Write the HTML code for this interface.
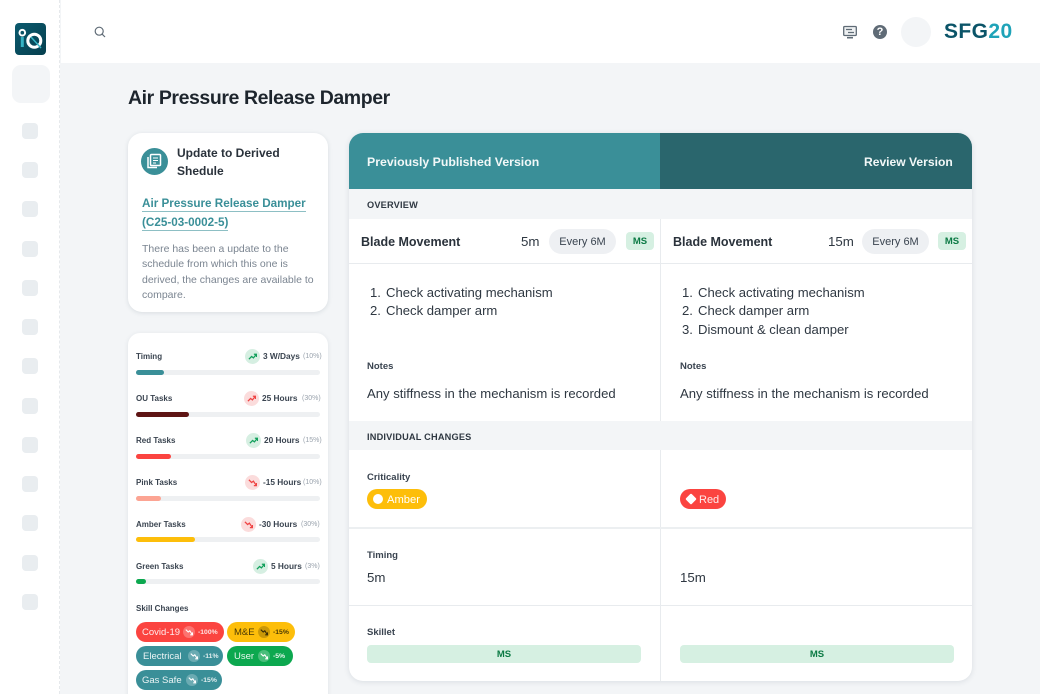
<!DOCTYPE html>
<html><head><meta charset="utf-8">
<style>
html,body{margin:0;padding:0;width:1040px;height:694px;overflow:hidden;background:#f3f5f7;font-family:"Liberation Sans",sans-serif;color:#1f2933}
#root{position:relative;width:1040px;height:694px;overflow:hidden}
.a{position:absolute}
.t{position:absolute;white-space:nowrap;line-height:20px}
.sq{position:absolute;left:22px;width:16px;height:16px;border-radius:4px;background:#e9edf0}
.track{position:absolute;left:136px;width:184px;height:5px;border-radius:3px;background:#eef0f2}
.fill{position:absolute;left:0;top:0;height:5px;border-radius:3px}
.ic{position:absolute;width:15px;height:15px;border-radius:50%}
.ic svg{position:absolute;left:3px;top:3px;width:9px;height:9px}
.pill{position:absolute;height:20px;border-radius:10px}
.pc{position:absolute;width:12px;height:12px;border-radius:50%;background:rgba(255,255,255,.25);top:4px}
.pc svg{position:absolute;left:2px;top:2px;width:8px;height:8px}
.l{font-size:8px;font-weight:bold;color:#3a4450;margin-top:1px}
.v{font-size:8.300px;font-weight:bold;color:#3a4450}
.p{font-size:7px;color:#9aa3ad;margin-top:1px}
.b{font-size:13.100px;color:#2f3842;margin-top:1px}
.h{font-size:9.200px;font-weight:bold;color:#2f3842;letter-spacing:.2px;margin-top:1px}
.n{font-size:9.500px;font-weight:bold;color:#3a4450}
.w{color:#fff}
.s{font-size:6.800px;font-weight:bold;top:1px !important}
</style></head><body>
<div id="root">
<!-- sidebar & header -->
<div class="a" style="left:0;top:0;width:60px;height:694px;background:#fff;border-right:1px dashed #e6e9ec;box-sizing:border-box"></div>
<div class="a" style="left:61px;top:0;width:979px;height:63px;background:#fff"></div>
<div class="a" style="left:15px;top:23px;width:31px;height:32px;border-radius:4px;background:linear-gradient(135deg,#0b5a6e,#063f4e)"></div>
<svg class="a" style="left:15px;top:23px" width="31" height="32" viewBox="0 0 31 32"><circle cx="7.300" cy="9.700" r="2.800" fill="none" stroke="#fff" stroke-width="2"/><rect x="5.800" y="14" width="3" height="10" fill="#36b3c4"/><circle cx="19.300" cy="17.700" r="6.500" fill="none" stroke="#fff" stroke-width="3"/><path d="M16 14l10 11" stroke="#36b3c4" stroke-width="1.500"/></svg>
<div class="a" style="left:12px;top:65px;width:38px;height:38px;border-radius:9px;background:#f3f5f7"></div>
<div class="sq" style="top:123px"></div><div class="sq" style="top:162px"></div><div class="sq" style="top:201px"></div><div class="sq" style="top:241px"></div><div class="sq" style="top:280px"></div><div class="sq" style="top:319px"></div><div class="sq" style="top:358px"></div><div class="sq" style="top:398px"></div><div class="sq" style="top:437px"></div><div class="sq" style="top:476px"></div><div class="sq" style="top:515px"></div><div class="sq" style="top:555px"></div><div class="sq" style="top:594px"></div>
<svg class="a" style="left:94px;top:26px" width="12" height="12" viewBox="0 0 12 12"><circle cx="5.200" cy="5.200" r="4" fill="none" stroke="#5f6b76" stroke-width="1.200"/><path d="M8.200 8.200l2.800 2.800" stroke="#5f6b76" stroke-width="1.200"/></svg>
<svg class="a" style="left:843px;top:25px" width="14" height="14" viewBox="0 0 14 14"><rect x=".7" y="1.500" width="12.600" height="9" rx="1" fill="#eef0f2" stroke="#5f6b76" stroke-width="1.300"/><path d="M3 4.500h6M5 7.500h6" stroke="#5f6b76" stroke-width="1.200"/><path d="M4 12.700h6" stroke="#5f6b76" stroke-width="1.600"/></svg>
<div class="a" style="left:873px;top:25px;width:14px;height:14px;border-radius:50%;background:#5f6b76;color:#fff;font-size:11px;font-weight:bold;line-height:14px;text-align:center">?</div>
<div class="a" style="left:901px;top:17px;width:30px;height:30px;border-radius:50%;background:#f3f5f7"></div>
<div class="t" style="left:944px;top:20px;font-size:21px;line-height:24px;font-weight:bold;color:#0b5468;letter-spacing:.4px">SFG<span style="color:#1fa3b8">20</span></div>

<div class="t" style="left:128px;top:85px;font-size:19.500px;line-height:26px;font-weight:bold;color:#1d252d;letter-spacing:-.42px">Air Pressure Release Damper</div>

<!-- info card -->
<div class="a" style="left:128px;top:133px;width:200px;height:179px;background:#fff;border-radius:14px;box-shadow:0 1px 5px rgba(40,60,80,.13)"></div>
<div class="a" style="left:141px;top:148px;width:27px;height:27px;border-radius:50%;background:#3a8f98"></div>
<svg class="a" style="left:146px;top:153px" width="17" height="17" viewBox="0 0 17 17"><rect x="4.500" y="1.500" width="10" height="11" rx="1" fill="none" stroke="#fff" stroke-width="1.500"/><path d="M2 4v10.500h9" fill="none" stroke="#fff" stroke-width="1.500"/><path d="M7 5h5M7 7.500h5M7 10h3" stroke="#fff" stroke-width="1.100"/></svg>
<div class="t" style="left:177px;top:143px;font-size:12px;font-weight:bold;color:#2a323b">Update to Derived</div>
<div class="t" style="left:177px;top:161px;font-size:12px;font-weight:bold;color:#2a323b">Shedule</div>
<div class="t" style="left:142px;top:196px;font-size:11.700px;color:#3a8f98;font-weight:bold;border-bottom:1px solid #8dbfc4;line-height:15px">Air Pressure Release Damper</div>
<div class="t" style="left:142px;top:215px;font-size:11.700px;color:#3a8f98;font-weight:bold;border-bottom:1px solid #8dbfc4;line-height:15px">(C25-03-0002-5)</div>
<div class="t" style="left:142px;top:239px;font-size:10.500px;color:#7b8591">There has been a update to the</div>
<div class="t" style="left:142px;top:254px;font-size:10.500px;color:#7b8591">schedule from which this one is</div>
<div class="t" style="left:142px;top:270px;font-size:10.500px;color:#7b8591">derived, the changes are available to</div>
<div class="t" style="left:142px;top:285px;font-size:10.500px;color:#7b8591">compare.</div>

<!-- stats card -->
<div class="a" style="left:128px;top:333px;width:200px;height:380px;background:#fff;border-radius:12px;box-shadow:0 1px 5px rgba(40,60,80,.1)"></div>
<svg width="0" height="0" style="position:absolute"><defs>
<symbol id="up" viewBox="0 0 10 10"><path d="M1 8l3-3 2 1.500L9 3M6.500 2.500H9.500V5.500" fill="none" stroke="currentColor" stroke-width="1.400"/></symbol>
<symbol id="dn" viewBox="0 0 10 10"><path d="M1 2l3 3 2-1.500L9 8M6.500 8.500H9.500V5.500" fill="none" stroke="currentColor" stroke-width="1.400"/></symbol>
</defs></svg>

<div class="t l" style="left:136px;top:346px">Timing</div>
<div class="ic" style="left:245px;top:349px;background:#d6efe2;color:#12a05c"><svg><use href="#up"/></svg></div>
<div class="t v" style="left:263px;top:346px">3 W/Days</div><div class="t p" style="left:303px;top:346px">(10%)</div>
<div class="track" style="top:370px"><div class="fill" style="width:28px;background:#3a8f98"></div></div>

<div class="t l" style="left:136px;top:388px">OU Tasks</div>
<div class="ic" style="left:244px;top:391px;background:#fbdcdc;color:#ef4444"><svg><use href="#up"/></svg></div>
<div class="t v" style="left:262px;top:388px">25 Hours</div><div class="t p" style="left:302px;top:388px">(30%)</div>
<div class="track" style="top:412px"><div class="fill" style="width:53px;background:#5e1414"></div></div>

<div class="t l" style="left:136px;top:430px">Red Tasks</div>
<div class="ic" style="left:246px;top:433px;background:#d6efe2;color:#12a05c"><svg><use href="#up"/></svg></div>
<div class="t v" style="left:264px;top:430px">20 Hours</div><div class="t p" style="left:303px;top:430px">(15%)</div>
<div class="track" style="top:454px"><div class="fill" style="width:35px;background:#fb4440"></div></div>

<div class="t l" style="left:136px;top:472px">Pink Tasks</div>
<div class="ic" style="left:245px;top:475px;background:#fbdcdc;color:#ef4444"><svg><use href="#dn"/></svg></div>
<div class="t v" style="left:263px;top:472px">-15 Hours</div><div class="t p" style="left:303px;top:472px">(10%)</div>
<div class="track" style="top:496px"><div class="fill" style="width:25px;background:#fca493"></div></div>

<div class="t l" style="left:136px;top:514px">Amber Tasks</div>
<div class="ic" style="left:241px;top:517px;background:#fbdcdc;color:#ef4444"><svg><use href="#dn"/></svg></div>
<div class="t v" style="left:259px;top:514px">-30 Hours</div><div class="t p" style="left:301px;top:514px">(30%)</div>
<div class="track" style="top:537px"><div class="fill" style="width:59px;background:#fdbe0a"></div></div>

<div class="t l" style="left:136px;top:556px">Green Tasks</div>
<div class="ic" style="left:253px;top:559px;background:#d6efe2;color:#12a05c"><svg><use href="#up"/></svg></div>
<div class="t v" style="left:271px;top:556px">5 Hours</div><div class="t p" style="left:305px;top:556px">(3%)</div>
<div class="track" style="top:579px"><div class="fill" style="width:10px;background:#0ca84f"></div></div>

<div class="t l" style="left:136px;top:598px">Skill Changes</div>

<div class="pill" style="left:136px;top:622px;width:88px;background:#fb4440"><div class="t w" style="left:6px;top:1px;font-size:9.500px;opacity:.9">Covid-19</div><div class="pc" style="left:47px"><svg color="#fff"><use href="#dn"/></svg></div><div class="t w s" style="left:62px;opacity:.85">-100%</div></div>
<div class="pill" style="left:227px;top:622px;width:68px;background:#fdbe0a"><div class="t" style="left:7px;top:1px;font-size:9.500px;color:#4a3a05">M&amp;E</div><div class="pc" style="left:31px;background:rgba(0,0,0,.2)"><svg color="#3a2d05"><use href="#dn"/></svg></div><div class="t s" style="left:46px;color:#4a3a05">-15%</div></div>
<div class="pill" style="left:136px;top:646px;width:87px;background:#3a8f98"><div class="t w" style="left:7px;top:1px;font-size:9.500px;opacity:.9">Electrical</div><div class="pc" style="left:52px"><svg color="#fff"><use href="#dn"/></svg></div><div class="t w s" style="left:67px;opacity:.85">-11%</div></div>
<div class="pill" style="left:227px;top:646px;width:66px;background:#0ca84f"><div class="t w" style="left:7px;top:1px;font-size:9.500px;opacity:.9">User</div><div class="pc" style="left:31px"><svg color="#fff"><use href="#dn"/></svg></div><div class="t w s" style="left:46px;opacity:.9">-5%</div></div>
<div class="pill" style="left:136px;top:670px;width:86px;background:#3a8f98"><div class="t w" style="left:6px;top:1px;font-size:9.500px;opacity:.9">Gas Safe</div><div class="pc" style="left:50px"><svg color="#fff"><use href="#dn"/></svg></div><div class="t w s" style="left:65px;opacity:.85">-15%</div></div>

<!-- main comparison card -->
<div class="a" style="left:349px;top:133px;width:623px;height:548px;background:#fff;border-radius:14px;box-shadow:0 1px 6px rgba(40,60,80,.12);overflow:hidden">
 <div class="a" style="left:0;top:0;width:311px;height:56px;background:#3a8f98"></div>
 <div class="a" style="left:311px;top:0;width:312px;height:56px;background:#2a666d"></div>
 <div class="a" style="left:0;top:56px;width:623px;height:30px;background:#f3f5f7"></div>
 <div class="a" style="left:0;top:288px;width:623px;height:29px;background:#f3f5f7"></div>
 <div class="a" style="left:311px;top:86px;width:1px;height:202px;background:#e8ebee"></div>
 <div class="a" style="left:311px;top:317px;width:1px;height:231px;background:#e8ebee"></div>
 <div class="a" style="left:0;top:130px;width:623px;height:1px;background:#e8ebee"></div>
 <div class="a" style="left:0;top:394px;width:623px;height:2px;background:#eceff1"></div>
 <div class="a" style="left:0;top:472px;width:623px;height:1px;background:#e8ebee"></div>
</div>
<div class="t" style="left:367px;top:152px;font-size:12.300px;font-weight:bold;color:#f2f8f8">Previously Published Version</div>
<div class="t" style="left:864px;top:152px;font-size:12.100px;font-weight:bold;color:#f2f8f8">Review Version</div>
<div class="t h" style="left:367px;top:194px">OVERVIEW</div>

<div class="t" style="left:361px;top:232px;font-size:12.500px;font-weight:bold;color:#2a323b">Blade Movement</div>
<div class="t" style="left:521px;top:232px;font-size:13.300px;color:#2f3842">5m</div>
<div class="a" style="left:549px;top:229px;width:67px;height:25px;border-radius:13px;background:#eef0f3;font-size:11px;line-height:26px;text-align:center;color:#3a4450">Every 6M</div>
<div class="a" style="left:626px;top:232px;width:28px;height:18px;border-radius:4px;background:#d6f0e2;font-size:9.500px;font-weight:bold;line-height:20px;text-align:center;color:#0b7a44">MS</div>

<div class="t" style="left:673px;top:232px;font-size:12.500px;font-weight:bold;color:#2a323b">Blade Movement</div>
<div class="t" style="left:828px;top:232px;font-size:13.300px;color:#2f3842">15m</div>
<div class="a" style="left:862px;top:229px;width:67px;height:25px;border-radius:13px;background:#eef0f3;font-size:11px;line-height:26px;text-align:center;color:#3a4450">Every 6M</div>
<div class="a" style="left:938px;top:232px;width:28px;height:18px;border-radius:4px;background:#d6f0e2;font-size:9.500px;font-weight:bold;line-height:20px;text-align:center;color:#0b7a44">MS</div>

<div class="t b" style="left:370px;top:282px">1.</div><div class="t b" style="left:386px;top:282px">Check activating mechanism</div>
<div class="t b" style="left:370px;top:300px">2.</div><div class="t b" style="left:386px;top:300px">Check damper arm</div>
<div class="t b" style="left:682px;top:282px">1.</div><div class="t b" style="left:698px;top:282px">Check activating mechanism</div>
<div class="t b" style="left:682px;top:300px">2.</div><div class="t b" style="left:698px;top:300px">Check damper arm</div>
<div class="t b" style="left:682px;top:319px">3.</div><div class="t b" style="left:698px;top:319px">Dismount &amp; clean damper</div>

<div class="t n" style="left:367px;top:357px">Notes</div>
<div class="t n" style="left:680px;top:357px">Notes</div>
<div class="t b" style="left:367px;top:383px">Any stiffness in the mechanism is recorded</div>
<div class="t b" style="left:680px;top:383px">Any stiffness in the mechanism is recorded</div>

<div class="t h" style="left:367px;top:426px">INDIVIDUAL CHANGES</div>

<div class="t n" style="left:367px;top:468px">Criticality</div>
<div class="a" style="left:367px;top:489px;width:60px;height:20px;border-radius:10px;background:#fdbe0a"></div>
<div class="a" style="left:373px;top:494px;width:10px;height:10px;border-radius:50%;background:#fff"></div>
<div class="t" style="left:387px;top:490px;font-size:11.200px;color:#fff">Amber</div>
<div class="a" style="left:680px;top:489px;width:46px;height:20px;border-radius:10px;background:#fb4440"></div>
<div class="a" style="left:687px;top:495px;width:8px;height:8px;background:#fff;transform:rotate(45deg);border-radius:1px"></div>
<div class="t" style="left:699px;top:490px;font-size:11px;color:#fff;opacity:.9">Red</div>

<div class="t n" style="left:367px;top:546px">Timing</div>
<div class="t" style="left:367px;top:568px;font-size:13.300px;color:#2f3842">5m</div>
<div class="t" style="left:680px;top:568px;font-size:13.300px;color:#2f3842">15m</div>

<div class="t n" style="left:367px;top:623px">Skillet</div>
<div class="a" style="left:367px;top:645px;width:274px;height:18px;border-radius:4px;background:#d6f0e2;font-size:9.500px;font-weight:bold;line-height:20px;text-align:center;color:#0b7a44">MS</div>
<div class="a" style="left:680px;top:645px;width:274px;height:18px;border-radius:4px;background:#d6f0e2;font-size:9.500px;font-weight:bold;line-height:20px;text-align:center;color:#0b7a44">MS</div>
</div>
</body></html>
